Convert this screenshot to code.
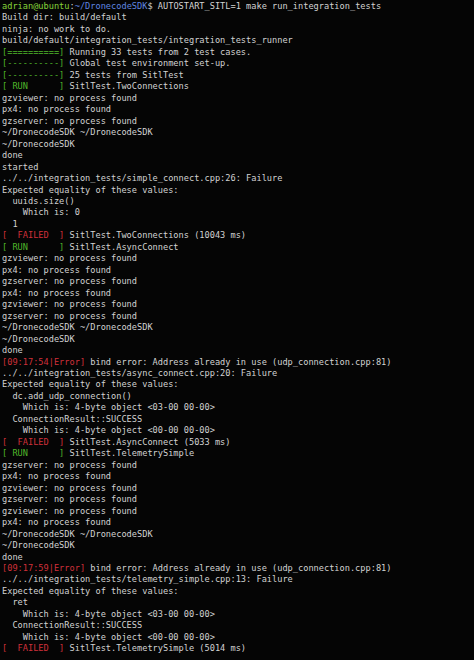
import React from "react";

type Seg = { t: string; c?: string };

const G = "text-[#4fb52a]";
const R = "text-[#d0303a]";

const plain = (t: string): Seg[] => [{ t }];

const lines: Seg[][] = [
  [
    { t: "adrian@ubuntu", c: "text-[#86d43a]" },
    { t: ":" },
    { t: "~/DronecodeSDK", c: "text-[#5f86e0]" },
    { t: "$ AUTOSTART_SITL=1 make run_integration_tests" },
  ],
  plain("Build dir: build/default"),
  plain("ninja: no work to do."),
  plain("build/default/integration_tests/integration_tests_runner"),
  [{ t: "[==========]", c: G }, { t: " Running 33 tests from 2 test cases." }],
  [{ t: "[----------]", c: G }, { t: " Global test environment set-up." }],
  [{ t: "[----------]", c: G }, { t: " 25 tests from SitlTest" }],
  [{ t: "[ RUN      ]", c: G }, { t: " SitlTest.TwoConnections" }],
  plain("gzviewer: no process found"),
  plain("px4: no process found"),
  plain("gzserver: no process found"),
  plain("~/DronecodeSDK ~/DronecodeSDK"),
  plain("~/DronecodeSDK"),
  plain("done"),
  plain("started"),
  plain("../../integration_tests/simple_connect.cpp:26: Failure"),
  plain("Expected equality of these values:"),
  plain("  uuids.size()"),
  plain("    Which is: 0"),
  plain("  1"),
  [{ t: "[  FAILED  ]", c: R }, { t: " SitlTest.TwoConnections (10043 ms)" }],
  [{ t: "[ RUN      ]", c: G }, { t: " SitlTest.AsyncConnect" }],
  plain("gzviewer: no process found"),
  plain("px4: no process found"),
  plain("gzserver: no process found"),
  plain("px4: no process found"),
  plain("gzviewer: no process found"),
  plain("gzserver: no process found"),
  plain("~/DronecodeSDK ~/DronecodeSDK"),
  plain("~/DronecodeSDK"),
  plain("done"),
  [
    { t: "[09:17:54|Error]", c: R },
    { t: " bind error: Address already in use (udp_connection.cpp:81)" },
  ],
  plain("../../integration_tests/async_connect.cpp:20: Failure"),
  plain("Expected equality of these values:"),
  plain("  dc.add_udp_connection()"),
  plain("    Which is: 4-byte object <03-00 00-00>"),
  plain("  ConnectionResult::SUCCESS"),
  plain("    Which is: 4-byte object <00-00 00-00>"),
  [{ t: "[  FAILED  ]", c: R }, { t: " SitlTest.AsyncConnect (5033 ms)" }],
  [{ t: "[ RUN      ]", c: G }, { t: " SitlTest.TelemetrySimple" }],
  plain("gzserver: no process found"),
  plain("px4: no process found"),
  plain("gzviewer: no process found"),
  plain("gzserver: no process found"),
  plain("gzviewer: no process found"),
  plain("px4: no process found"),
  plain("~/DronecodeSDK ~/DronecodeSDK"),
  plain("~/DronecodeSDK"),
  plain("done"),
  [
    { t: "[09:17:59|Error]", c: R },
    { t: " bind error: Address already in use (udp_connection.cpp:81)" },
  ],
  plain("../../integration_tests/telemetry_simple.cpp:13: Failure"),
  plain("Expected equality of these values:"),
  plain("  ret"),
  plain("    Which is: 4-byte object <03-00 00-00>"),
  plain("  ConnectionResult::SUCCESS"),
  plain("    Which is: 4-byte object <00-00 00-00>"),
  [{ t: "[  FAILED  ]", c: R }, { t: " SitlTest.TelemetrySimple (5014 ms)" }],
];

export default function App() {
  return (
    <div className="w-[474px] h-[660px] overflow-hidden bg-[#050505] pl-[2px] pt-[1px]">
      <div
        className="text-[#d2d2d2] text-[8.63px] leading-[11.47px] whitespace-pre"
        style={{ fontFamily: '"DejaVu Sans Mono", "Liberation Mono", monospace' }}
      >
        {lines.map((segs, i) => (
          <div key={i} className="h-[11.47px]">
            {segs.map((s, j) => (
              <span key={j} className={s.c}>
                {s.t}
              </span>
            ))}
          </div>
        ))}
      </div>
    </div>
  );
}
